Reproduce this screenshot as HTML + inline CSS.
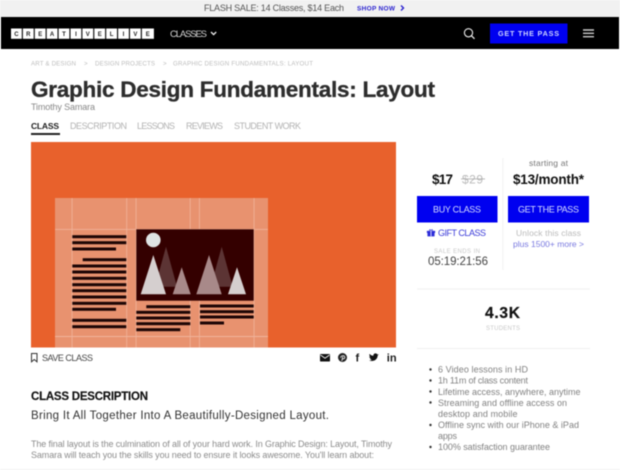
<!DOCTYPE html>
<html><head><meta charset="utf-8"><style>
html,body{margin:0;padding:0;background:#fff;width:620px;height:470px;overflow:hidden}
svg{display:block;filter:blur(.45px)}
text{font-family:"Liberation Sans",sans-serif;white-space:pre}
.b{font-weight:bold}
</style></head><body>
<svg width="620" height="470" viewBox="0 0 620 470" xmlns="http://www.w3.org/2000/svg">
<rect width="620" height="470" fill="#fff"/>
<rect width="620" height="17" fill="#f1f1f1"/>
<rect x="1" y="17" width="618" height="32" fill="#000"/>
<text x="204" y="11" font-size="9" fill="#555" textLength="140" lengthAdjust="spacing">FLASH SALE: 14 Classes, $14 Each</text>
<text class="b" x="357" y="10.5" font-size="6.5" fill="#2a22d0" textLength="38" lengthAdjust="spacing">SHOP NOW</text>
<path d="M401 5.500l2.500 2.500-2.500 2.500" fill="none" stroke="#2a22d0" stroke-width="1.400"/>

<g fill="#fff"><rect x="11" y="28.500" width="10.800" height="10.300"/><rect x="22.900" y="28.500" width="10.800" height="10.300"/><rect x="34.800" y="28.500" width="10.800" height="10.300"/><rect x="46.700" y="28.500" width="10.800" height="10.300"/><rect x="58.600" y="28.500" width="10.800" height="10.300"/><rect x="70.500" y="28.500" width="10.800" height="10.300"/><rect x="82.400" y="28.500" width="10.800" height="10.300"/><rect x="94.300" y="28.500" width="10.800" height="10.300"/><rect x="106.200" y="28.500" width="10.800" height="10.300"/><rect x="118.100" y="28.500" width="10.800" height="10.300"/><rect x="130" y="28.500" width="10.800" height="10.300"/><rect x="141.900" y="28.500" width="12" height="10.300"/></g>
<g font-size="6" font-weight="bold" fill="#222" text-anchor="middle"><text x="16.400" y="36">C</text><text x="28.300" y="36">R</text><text x="40.200" y="36">E</text><text x="52.100" y="36">A</text><text x="64" y="36">T</text><text x="75.900" y="36">I</text><text x="87.800" y="36">V</text><text x="99.700" y="36">E</text><text x="111.600" y="36">L</text><text x="123.500" y="36">I</text><text x="135.400" y="36">V</text><text x="147.800" y="36">E</text></g>
<text x="170" y="37" font-size="9.500" fill="#d5d5d5" textLength="37" lengthAdjust="spacing">CLASSES</text>
<path d="M211 32l2.600 2.600 2.600-2.600" fill="none" stroke="#eee" stroke-width="1.300"/>

<circle cx="468.500" cy="32.800" r="4.100" fill="none" stroke="#eee" stroke-width="1.100"/>
<path d="M471.500 35.800l3 3" stroke="#eee" stroke-width="1.200"/>
<rect x="490" y="23.500" width="77.500" height="20" fill="#0000f0"/>
<text class="b" x="498" y="36" font-size="7.200" fill="#cfd6ff" textLength="61" lengthAdjust="spacing">GET THE PASS</text>
<path d="M583 30h11M583 33.300h11M583 36.700h11" stroke="#ccc" stroke-width="1.400"/>

<g font-size="6.200" fill="#bdbdbd">
<text x="31" y="65.500" textLength="45" lengthAdjust="spacing">ART &amp; DESIGN</text>
<text x="84" y="65.500">&gt;</text>
<text x="95" y="65.500" textLength="60" lengthAdjust="spacing">DESIGN PROJECTS</text>
<text x="163" y="65.500">&gt;</text>
<text x="173" y="65.500" textLength="140" lengthAdjust="spacing">GRAPHIC DESIGN FUNDAMENTALS: LAYOUT</text>
</g>
<text class="b" x="31" y="97" font-size="22.500" fill="#2d2d2d" stroke="#2d2d2d" stroke-width=".3" textLength="404" lengthAdjust="spacing">Graphic Design Fundamentals: Layout</text>
<text x="31" y="110" font-size="9" fill="#888" textLength="64" lengthAdjust="spacing">Timothy Samara</text>
<text class="b" x="31" y="129" font-size="8.500" fill="#222" textLength="28" lengthAdjust="spacing">CLASS</text>
<g font-size="9" fill="#b2b2b2">
<text x="70" y="129" textLength="57" lengthAdjust="spacing">DESCRIPTION</text>
<text x="137" y="129" textLength="38" lengthAdjust="spacing">LESSONS</text>
<text x="186" y="129" textLength="37" lengthAdjust="spacing">REVIEWS</text>
<text x="234" y="129" textLength="67" lengthAdjust="spacing">STUDENT WORK</text>
</g>
<rect x="31" y="133" width="29" height="2" fill="#222"/>

<rect x="31" y="142" width="365" height="205.500" fill="#e8612c"/>
<rect x="55" y="198" width="213" height="149.500" fill="#e8926f"/>
<g fill="#f0b49b">
<rect x="71.700" y="198" width=".8" height="149.500"/><rect x="126.300" y="198" width=".8" height="149.500"/><rect x="135.700" y="198" width=".8" height="149.500"/><rect x="189.800" y="198" width=".8" height="149.500"/><rect x="199" y="198" width=".8" height="149.500"/><rect x="253.700" y="198" width=".8" height="149.500"/>
<rect x="55" y="229" width="213" height=".8"/><rect x="55" y="336" width="213" height="1"/>
</g>
<rect x="136.300" y="229.300" width="117.400" height="71.400" fill="#340000"/>
<circle cx="153.300" cy="240" r="7.300" fill="#dfe3e3"/>
<path d="M166 246.700L155 286.700H177Z M221.700 246.700L210.700 286.700H232.700Z" fill="#5c3434"/>
<path d="M153.300 255L140.700 294.300H166Z M237 267.300L228 294.300H246Z" fill="#d5cfcf"/>
<path d="M181.700 267.300L172.700 294.300H190.700Z M209 255L196.300 294.300H221.700Z" fill="#a88989"/>
<g fill="#1d0505">
<rect x="72.300" y="235.200" width="54" height="3"/><rect x="72.300" y="241.200" width="54" height="3"/><rect x="72.300" y="247.500" width="43.700" height="3"/><rect x="82.700" y="258.200" width="43.600" height="3"/><rect x="72.300" y="264.500" width="54" height="3"/><rect x="72.300" y="270.500" width="54" height="3"/><rect x="72.300" y="276.800" width="54" height="3"/><rect x="72.300" y="283.200" width="54" height="3"/><rect x="72.300" y="289.200" width="54" height="3"/><rect x="72.300" y="295.500" width="54" height="3"/><rect x="72.300" y="301.800" width="54" height="3"/><rect x="72.300" y="307.800" width="43.700" height="3"/><rect x="72.300" y="318.800" width="54" height="3"/><rect x="72.300" y="325.200" width="54" height="3"/>
<rect x="146.300" y="305.200" width="44" height="3"/><rect x="136.300" y="310.800" width="54" height="3"/><rect x="136.300" y="316.500" width="54" height="3"/><rect x="136.300" y="322.200" width="54" height="3"/><rect x="136.300" y="328.200" width="44" height="3"/>
<rect x="200" y="304.500" width="53.700" height="3"/><rect x="200" y="310.200" width="53.700" height="3"/><rect x="200" y="315.500" width="53.700" height="3"/><rect x="200" y="321.500" width="24" height="3"/>
</g>

<path d="M31.500 353.500h5.500v8.300l-2.750-2.300-2.750 2.300z" fill="none" stroke="#333" stroke-width="1"/>
<text x="42" y="361" font-size="9" fill="#444" textLength="51" lengthAdjust="spacing">SAVE CLASS</text>
<rect x="320" y="354" width="10" height="7.500" rx=".8" fill="#111"/>
<path d="M320.500 355l4.500 3.200 4.500-3.200" fill="none" stroke="#fff" stroke-width=".8"/>
<circle cx="342.500" cy="357.500" r="4.500" fill="#222"/>
<path d="M341.800 361l1-4.500M340.800 357.800c-.8-2 3.700-3.200 4-.8.200 1.800-2 2.400-2.500 1.300" fill="none" stroke="#fff" stroke-width=".8"/>
<text class="b" x="355.500" y="361.500" font-size="11" fill="#1a1a1a">f</text>
<path d="M369 360.400c3.600 1.800 8.600-.2 8.700-5l1.200-1.200-1.500.3c-1-2-4.400-1.100-4 1.300-1.500 0-3-.9-3.800-1.900-.6 1 0 2.300.7 2.800l-1-.2c0 1 .7 1.700 1.600 2l-.9.100c.3.700 1 1.100 1.800 1.100-.8.600-1.800.8-2.800.7z" fill="#111"/>
<text class="b" x="386.800" y="361.500" font-size="11" fill="#1a1a1a">in</text>

<text class="b" x="31" y="400" font-size="11.500" fill="#111" stroke="#111" stroke-width=".15" textLength="117" lengthAdjust="spacing">CLASS DESCRIPTION</text>
<text x="31" y="419" font-size="11.500" fill="#333" textLength="298" lengthAdjust="spacing">Bring It All Together Into A Beautifully-Designed Layout.</text>
<text x="31" y="447" font-size="9" fill="#8c8c8c" textLength="361" lengthAdjust="spacing">The final layout is the culmination of all of your hard work. In Graphic Design: Layout, Timothy</text>
<text x="31" y="458" font-size="9" fill="#8c8c8c" textLength="343" lengthAdjust="spacing">Samara will teach you the skills you need to ensure it looks awesome. You'll learn about:</text>

<text class="b" x="432" y="184" font-size="13.500" fill="#111" textLength="21" lengthAdjust="spacing">$17</text>
<text x="462" y="183.500" font-size="12" fill="#bbb" textLength="21" lengthAdjust="spacing">$29</text>
<rect x="461" y="178.500" width="24" height=".8" fill="#aaa"/>
<rect x="502.500" y="158" width=".8" height="112" fill="#efefef"/>
<text x="529" y="166" font-size="8.500" fill="#777" textLength="39" lengthAdjust="spacing">starting at</text>
<text class="b" x="513" y="184" font-size="13.500" fill="#111" textLength="71" lengthAdjust="spacing">$13/month*</text>
<rect x="417" y="196" width="80.500" height="26.500" fill="#0000f0"/>
<rect x="508" y="196" width="81" height="26.500" fill="#0000f0"/>
<text x="433" y="212.500" font-size="9" fill="#d8deff" textLength="48" lengthAdjust="spacing">BUY CLASS</text>
<text x="518" y="212.500" font-size="9" fill="#d8deff" textLength="61" lengthAdjust="spacing">GET THE PASS</text>
<path d="M427 231h8v1.800h-.6v3.400h-6.800v-3.400H427z M429 230.500l1-1.300 1 1.300 1-1.300 1 1.300" fill="#2b2bd8" stroke="#2b2bd8" stroke-width=".3"/>
<rect x="430.600" y="231" width=".8" height="5.200" fill="#fff"/>
<text x="438" y="236" font-size="9" fill="#3a3ad8" textLength="48" lengthAdjust="spacing">GIFT CLASS</text>
<text x="434" y="253" font-size="6" fill="#c8c8c8" textLength="46" lengthAdjust="spacing">SALE ENDS IN</text>
<text x="428" y="265" font-size="11.500" fill="#444" textLength="60" lengthAdjust="spacing">05:19:21:56</text>
<text x="516" y="236" font-size="8.500" fill="#bbb" textLength="65" lengthAdjust="spacing">Unlock this class</text>
<text x="513" y="247" font-size="8.500" fill="#7a7ae0" textLength="71" lengthAdjust="spacing">plus 1500+ more &gt;</text>

<rect x="417" y="288.500" width="173" height="1" fill="#f0f0f0"/>
<text class="b" x="485" y="318" font-size="15.500" fill="#111" stroke="#111" stroke-width=".2" textLength="35" lengthAdjust="spacing">4.3K</text>
<text x="486" y="330" font-size="6" fill="#c8c8c8" textLength="34" lengthAdjust="spacing">STUDENTS</text>
<rect x="417" y="348" width="173" height="1" fill="#f0f0f0"/>

<g fill="#333"><circle cx="430.500" cy="369.500" r="1.200"/><circle cx="430.500" cy="380.500" r="1.200"/><circle cx="430.500" cy="391.500" r="1.200"/><circle cx="430.500" cy="402.500" r="1.200"/><circle cx="430.500" cy="425" r="1.200"/><circle cx="430.500" cy="447" r="1.200"/></g>
<g font-size="9" fill="#828282">
<text x="438" y="372.500" textLength="90" lengthAdjust="spacing">6 Video lessons in HD</text>
<text x="438" y="383.500" textLength="90" lengthAdjust="spacing">1h 11m of class content</text>
<text x="438" y="395" textLength="142.500" lengthAdjust="spacing">Lifetime access, anywhere, anytime</text>
<text x="438" y="406" textLength="129" lengthAdjust="spacing">Streaming and offline access on</text>
<text x="438" y="417" textLength="79.500" lengthAdjust="spacing">desktop and mobile</text>
<text x="438" y="428" textLength="141" lengthAdjust="spacing">Offline sync with our iPhone &amp; iPad</text>
<text x="438" y="439" textLength="19" lengthAdjust="spacing">apps</text>
<text x="438" y="450" textLength="112" lengthAdjust="spacing">100% satisfaction guarantee</text>
</g>
<rect x="0" y="469" width="620" height="1" fill="#f2f2f2"/>
</svg>
</body></html>
